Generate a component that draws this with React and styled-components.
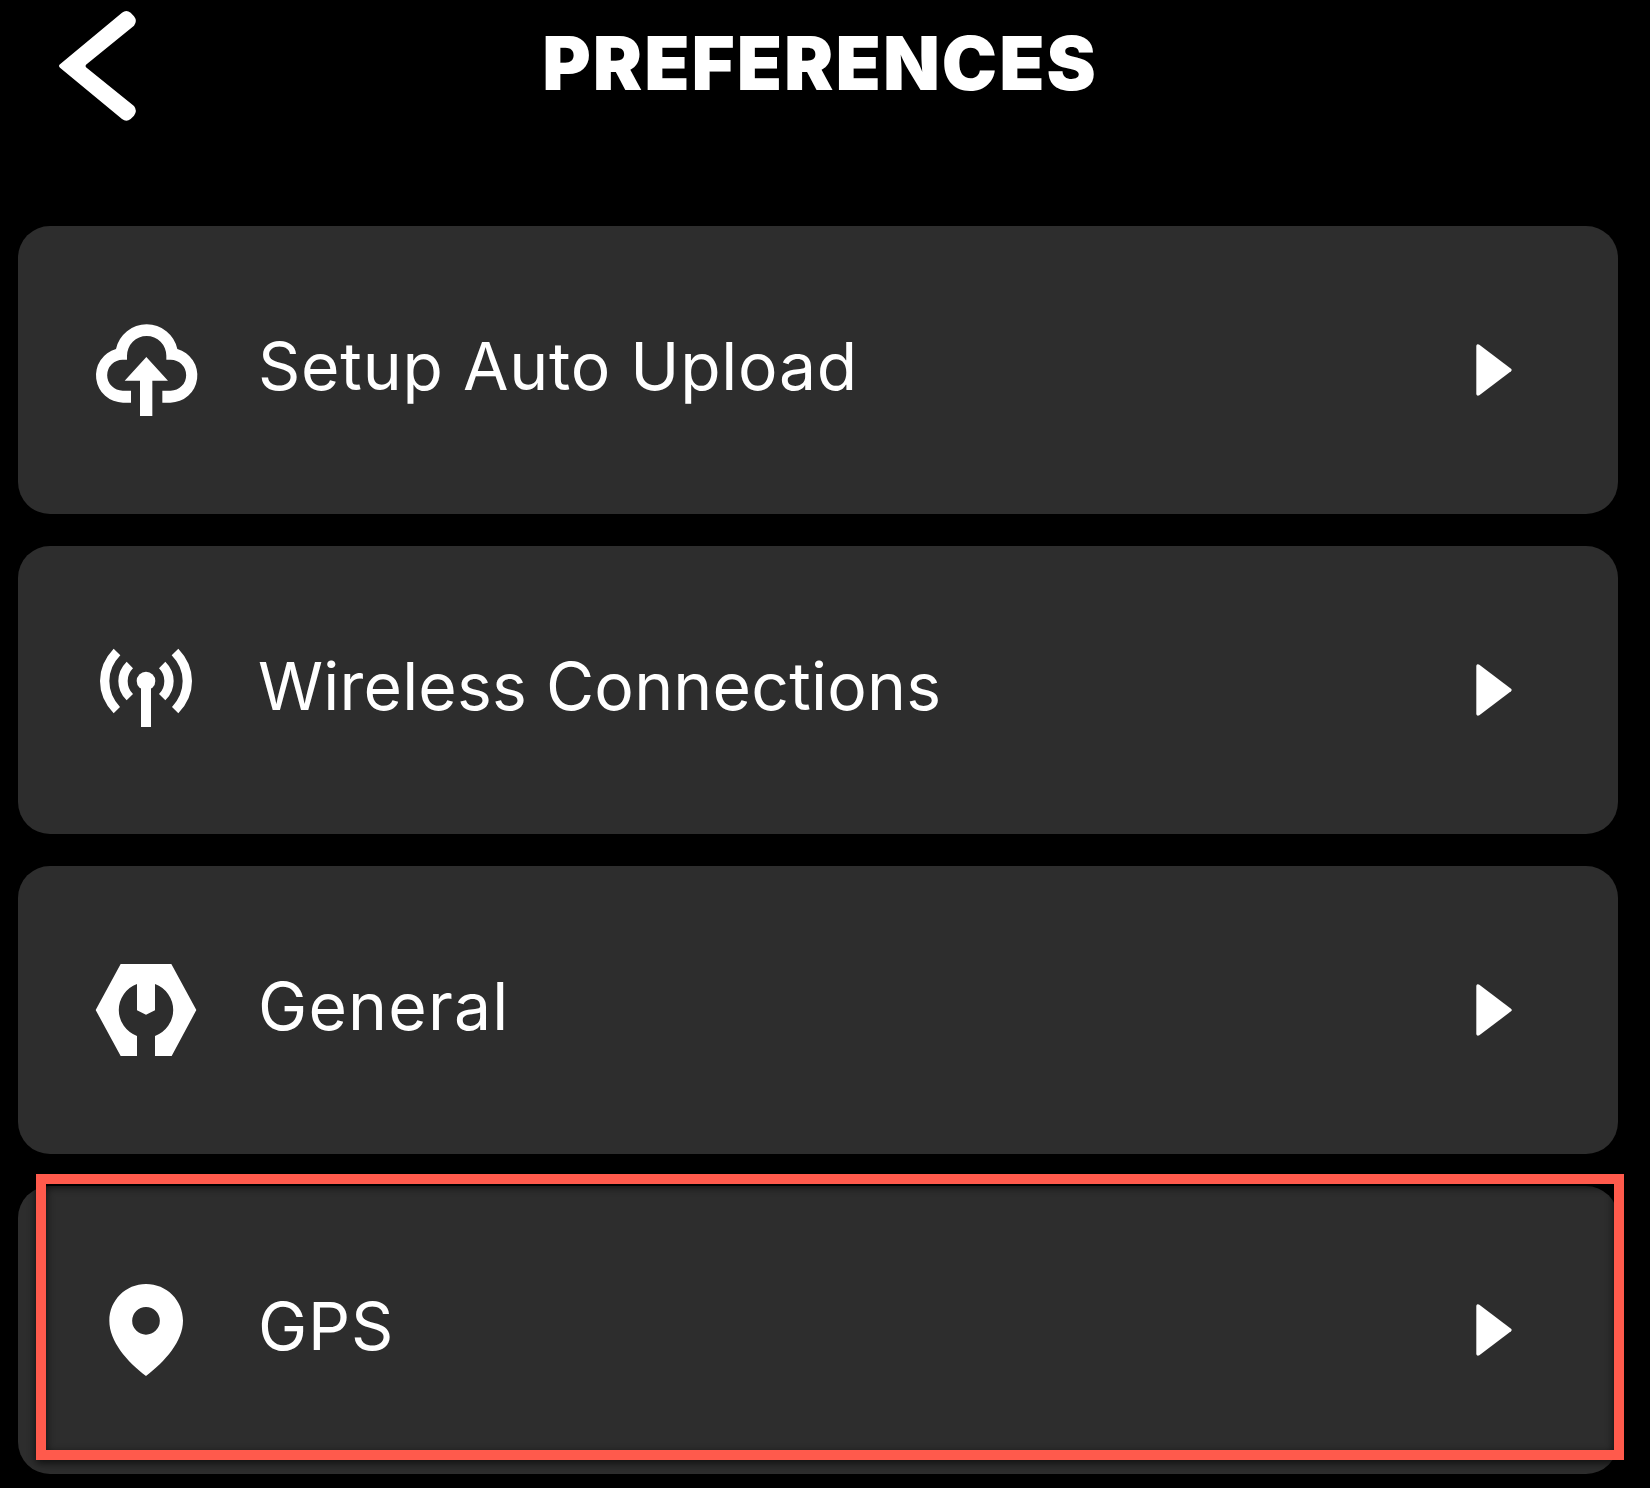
import React from "react";
import styled, { createGlobalStyle } from "styled-components";

const GlobalStyle = createGlobalStyle`
  * { box-sizing: border-box; }
  body {
    margin: 0;
    background: #000;
    color: #fff;
    font-family: Inter, "Open Sans", sans-serif;
  }
`;

const Screen = styled.main`
  width: 1650px;
  height: 1488px;
  background: #000;
  overflow: hidden;
`;

const Header = styled.header`
  display: grid;
  grid-template-columns: 120px 1fr 120px;
  align-items: start;
  height: 226px;
  padding: 0 50px 0 40px;
`;

const BackButton = styled.button`
  display: block;
  width: 120px;
  height: 130px;
  padding: 0;
  border: 0;
  background: none;
  color: inherit;
`;

const Title = styled.h1`
  margin: 0;
  padding-top: 13px;
  text-align: center;
  font-size: 74px;
  line-height: 100px;
  font-weight: 900;
  letter-spacing: 2px;
  white-space: nowrap;
`;

const List = styled.nav`
  display: flex;
  flex-direction: column;
  gap: 32px;
  width: 1600px;
  margin-left: 18px;
`;

const Row = styled.div`
  position: relative;
  display: flex;
  align-items: center;
  height: 288px;
  padding: 0 88px 0 62px;
  border-radius: 32px;
  background: #2d2d2d;
`;

const Label = styled.span`
  flex: 1;
  padding: 0 0 8px 48px;
  font-size: 66px;
  line-height: 96px;
  font-weight: 400;
  letter-spacing: ${(p) => p.$spacing}px;
  white-space: nowrap;
`;

const Highlight = styled.div`
  position: absolute;
  left: 18px;
  top: -12px;
  width: 1588px;
  height: 286px;
  border: 10px solid #ff5a4c;
  filter: drop-shadow(0 3px 4px rgba(0, 0, 0, 0.7));
  pointer-events: none;
`;

const Icon = styled.svg`
  display: block;
  flex: none;
  fill: currentColor;
`;

const BackIcon = () => (
  <Icon width="120" height="130" viewBox="0 0 360 390">
    <path d="M60 193 L246 38 Q259 28 272 38 L282 49 Q293 63 282 77 L138 194 Q135 198 138 202 L282 318 Q293 332 282 347 L272 357 Q259 367 246 357 L60 203 Q54 198 60 193 Z" />
  </Icon>
);

const CloudIcon = () => (
  <Icon width="130" height="120" viewBox="0 0 390 360">
    <path d="M153 278 H129 A82 82 0 0 1 108 117 A94.200 94.200 0 0 1 292 117 A82 82 0 0 1 271 278 H247 V242 H272 A46.500 46.500 0 0 0 272 149 H259 V137 A59 59 0 0 0 141 137 V149 H128 A46.500 46.500 0 0 0 128 242 H153 Z" />
    <path d="M199 141 L264 212 H217 V318 H180 V212 H134 Z" />
  </Icon>
);

const AntennaIcon = () => (
  <Icon width="130" height="120" viewBox="0 0 390 360">
    <circle cx="198" cy="153" r="28" />
    <path d="M183 165 H213 V291 H183 Z" />
    <path d="M101 56 L121 76 Q88 110 88 153 Q88 196 120 231 L101 250 Q60 207 60 153 Q60 99 101 56 Z" />
    <path d="M140 95 L159 115 Q143 131 143 153 Q143 177 159 192 L140 211 Q115 187 115 153 Q115 120 140 95 Z" />
    <path d="M256 95 L237 115 Q253 131 253 153 Q253 177 237 192 L256 211 Q281 187 281 153 Q281 120 256 95 Z" />
    <path d="M295 56 L275 76 Q308 110 308 153 Q308 196 276 231 L295 250 Q336 207 336 153 Q336 99 295 56 Z" />
  </Icon>
);

const WrenchIcon = () => (
  <Icon width="130" height="120" viewBox="0 0 390 360">
    <path d="M122 42 H274 L349 180 L275 318 H225 V258 A83 83 0 0 0 225 102 V181 L198 194 L171 181 V102 A83 83 0 0 0 171 258 V318 H122 L47 180 Z" />
  </Icon>
);

const PinIcon = () => (
  <Icon width="130" height="120" viewBox="0 0 390 360">
    <path
      fillRule="evenodd"
      d="M198 42 C137 42 88 91 88 152 C88 214 141 274 198 318 C255 274 309 214 309 152 C309 91 260 42 198 42 Z M198 111 A41.500 41.500 0 1 1 198 194 A41.500 41.500 0 1 1 198 111 Z"
    />
  </Icon>
);

const ArrowIcon = () => (
  <Icon width="70" height="80" viewBox="0 0 210 240">
    <path d="M49 47 Q51 41 58 44 L153 116 Q158 120 153 124 L58 196 Q51 200 49 193 Z" />
  </Icon>
);

const items = [
  { label: "Setup Auto Upload", icon: CloudIcon, spacing: 0.75 },
  { label: "Wireless Connections", icon: AntennaIcon, spacing: 0.22 },
  { label: "General", icon: WrenchIcon, spacing: 1.2 },
  { label: "GPS", icon: PinIcon, spacing: 0.8, highlighted: true },
];

export default function App() {
  return (
    <Screen>
      <GlobalStyle />
      <Header>
        <BackButton aria-label="Back">
          <BackIcon />
        </BackButton>
        <Title>PREFERENCES</Title>
      </Header>
      <List>
        {items.map(({ label, icon: Glyph, spacing, highlighted }) => (
          <Row key={label}>
            <Glyph />
            <Label $spacing={spacing}>{label}</Label>
            <ArrowIcon />
            {highlighted && <Highlight />}
          </Row>
        ))}
      </List>
    </Screen>
  );
}
